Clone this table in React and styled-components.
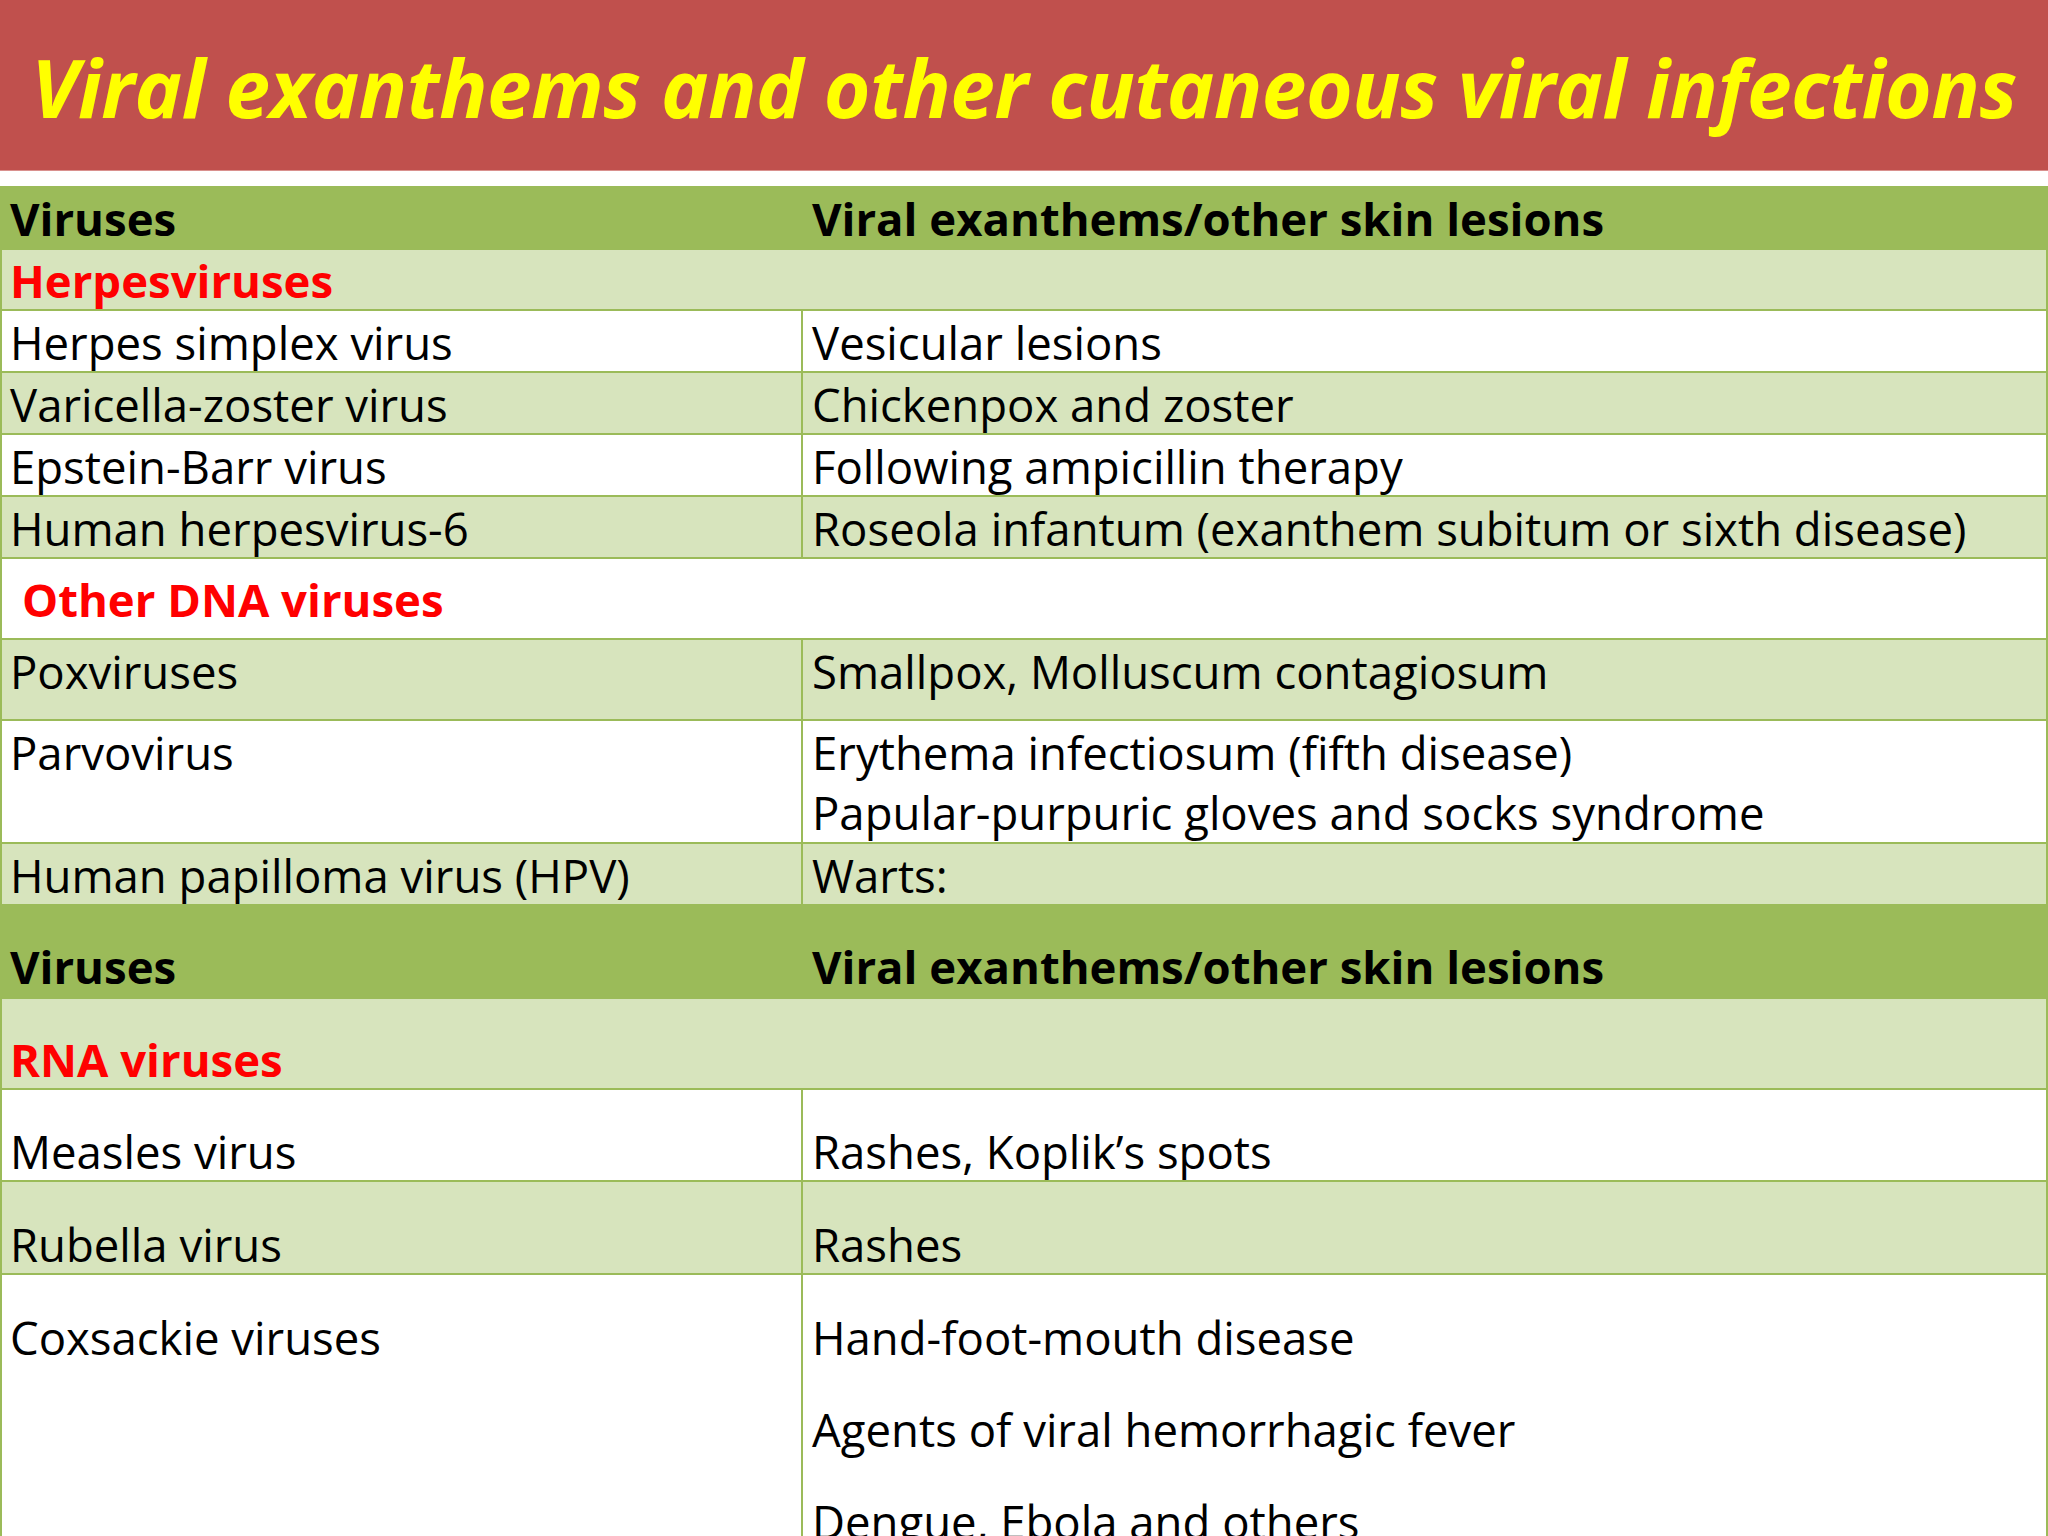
import React from "react";
import styled, { createGlobalStyle } from "styled-components";

const GlobalStyle = createGlobalStyle`
  html, body {
    margin: 0;
    padding: 0;
    background: #ffffff;
  }
  body {
    width: 2048px;
    height: 1536px;
    overflow: hidden;
    font-family: "Open Sans", "Noto Sans", sans-serif;
  }
`;

const Page = styled.div`
  display: flex;
  flex-direction: column;
  width: 2048px;
`;

const TitleBar = styled.header`
  height: 170px;
  background: #c0504d;
  display: flex;
  align-items: center;
  justify-content: center;
  border-bottom: 1px solid #d9908e;
`;

const Title = styled.h1`
  margin: 4px 0 0 0;
  color: #ffff00;
  font-size: 80px;
  line-height: 110px;
  font-weight: 700;
  font-style: italic;
  letter-spacing: -0.4px;
  white-space: nowrap;
`;

const Gap = styled.div`
  height: 15px;
`;

const Table = styled.div`
  display: flex;
  flex-direction: column;
  border-left: 2px solid #9bbb59;
  border-right: 2px solid #9bbb59;
`;

const tones = {
  head: "#9bbb59",
  light: "#d7e4bd",
  white: "#ffffff",
};

const Row = styled.div`
  box-sizing: border-box;
  display: grid;
  grid-template-columns: ${(p) => (p.$span ? "1fr" : "801px 1fr")};
  height: ${(p) => p.$h}px;
  background: ${(p) => tones[p.$tone]};
  border-bottom: 2px solid #9bbb59;
  font-size: 45.5px;
  line-height: 58px;
  color: #000000;
  font-weight: ${(p) => (p.$tone === "head" ? 700 : 400)};
`;

const Cell = styled.div`
  box-sizing: border-box;
  padding: ${(p) => p.$pad || 0}px 8px 0 8px;
  white-space: nowrap;
  &:first-child {
    border-right: ${(p) => (p.$noDivider ? "none" : "2px solid #9bbb59")};
  }
  & + & {
    padding-left: 9px;
  }
`;

const Group = styled.div`
  box-sizing: border-box;
  padding: ${(p) => p.$pad || 0}px 8px 0 ${(p) => p.$indent || 8}px;
  color: #ff0000;
  font-weight: 700;
  white-space: nowrap;
`;

const Line = styled.div`
  margin-top: ${(p) => p.$gap || 0}px;
  line-height: ${(p) => p.$lh || 58}px;
`;

const herpes = [
  ["Herpes simplex virus", "Vesicular lesions"],
  ["Varicella-zoster virus", "Chickenpox and zoster"],
  ["Epstein-Barr virus", "Following ampicillin therapy"],
  ["Human herpesvirus-6", "Roseola infantum (exanthem subitum or sixth disease)"],
];

export default function App() {
  return (
    <Page>
      <GlobalStyle />
      <TitleBar>
        <Title>Viral exanthems and other cutaneous viral infections</Title>
      </TitleBar>
      <Gap />
      <Table>
        <Row $tone="head" $h={64}>
          <Cell $pad={3} $noDivider>Viruses</Cell>
          <Cell $pad={3}>Viral exanthems/other skin lesions</Cell>
        </Row>
        <Row $tone="light" $span $h={61}>
          <Group $pad={1}>Herpesviruses</Group>
        </Row>
        {herpes.map(([virus, lesion], i) => (
          <Row key={virus} $tone={i % 2 ? "light" : "white"} $h={62}>
            <Cell $pad={2}>{virus}</Cell>
            <Cell $pad={2}>{lesion}</Cell>
          </Row>
        ))}
        <Row $tone="white" $span $h={81}>
          <Group $pad={11} $indent={20}>Other DNA viruses</Group>
        </Row>
        <Row $tone="light" $h={81}>
          <Cell $pad={2}>Poxviruses</Cell>
          <Cell $pad={2}>Smallpox, Molluscum contagiosum</Cell>
        </Row>
        <Row $tone="white" $h={123}>
          <Cell $pad={2}>Parvovirus</Cell>
          <Cell $pad={1}>
            <Line $lh={60}>Erythema infectiosum (fifth disease)</Line>
            <Line $lh={60}>Papular-purpuric gloves and socks syndrome</Line>
          </Cell>
        </Row>
        <Row $tone="light" $h={62}>
          <Cell $pad={2}>Human papilloma virus (HPV)</Cell>
          <Cell $pad={2}>Warts:</Cell>
        </Row>
        <Row $tone="head" $h={93}>
          <Cell $pad={31} $noDivider>Viruses</Cell>
          <Cell $pad={31}>Viral exanthems/other skin lesions</Cell>
        </Row>
        <Row $tone="light" $span $h={91}>
          <Group $pad={31}>RNA viruses</Group>
        </Row>
        <Row $tone="white" $h={92}>
          <Cell $pad={32}>Measles virus</Cell>
          <Cell $pad={32}>Rashes, Koplik’s spots</Cell>
        </Row>
        <Row $tone="light" $h={93}>
          <Cell $pad={33}>Rubella virus</Cell>
          <Cell $pad={33}>Rashes</Cell>
        </Row>
        <Row $tone="white" $h={290}>
          <Cell $pad={33}>Coxsackie viruses</Cell>
          <Cell>
            <Line $gap={33}>Hand-foot-mouth disease</Line>
            <Line $gap={34}>Agents of viral hemorrhagic fever</Line>
            <Line $gap={34}>Dengue, Ebola and others</Line>
          </Cell>
        </Row>
      </Table>
    </Page>
  );
}
